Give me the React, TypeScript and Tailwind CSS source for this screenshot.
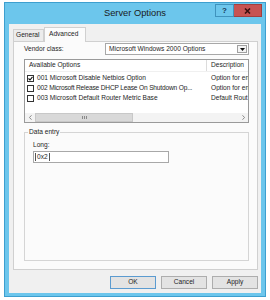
export default function App() {
  const rows = [
    { checked: true, name: "001 Microsoft Disable Netbios Option", desc: "Option for en", tight: false },
    { checked: false, name: "002 Microsoft Release DHCP Lease On Shutdown Op...", desc: "Option for en", tight: true },
    { checked: false, name: "003 Microsoft Default Router Metric Base", desc: "Default Rout", tight: false },
  ];
  return (
    <div className="w-[270px] h-[300px] bg-white pt-[2px] pl-[4px] font-['Liberation_Sans',Arial,sans-serif] text-[#1e1e1e]">
      <div className="relative w-[262px] h-[295px] border border-[#3d9fcf] bg-[#6cc6ec] flex flex-col px-[4px] pb-[3px]">
        {/* title bar */}
        <div className="h-[21px] flex items-center justify-center text-[9.3px] text-[#1b1b1b] leading-none">
          Server Options
        </div>
        {/* caption buttons */}
        <div className="absolute top-[1px] right-[3px] flex">
          <div className="w-[19px] h-[13px] border border-[#3f93bd] bg-[#6cc6ec] flex items-center justify-center text-[8px] font-bold text-[#163a56] leading-none">
            ?
          </div>
          <div className="w-[28px] h-[13px] border border-[#a13f3f] border-l-0 bg-[#c75352] flex items-center justify-center">
            <svg width="7" height="6" viewBox="0 0 7 6">
              <path d="M1 0.5 L6 5.5 M6 0.5 L1 5.5" stroke="#3a1010" strokeWidth="1.6" />
            </svg>
          </div>
        </div>
        {/* client area */}
        <div className="flex-1 bg-[#f0f0f0] flex flex-col pl-[4px] pr-[3px] pt-[3px] pb-[4px] text-[6.6px] leading-none">
          {/* tabs */}
          <div className="h-[14px] flex items-end relative z-10">
            <div className="h-[12px] w-[31px] border border-b-0 border-[#d0d0d0] bg-[#ececec] flex items-center pl-[2px]">
              General
            </div>
            <div className="h-[15px] w-[42px] -mb-[1px] border border-b-0 border-[#d0d0d0] bg-[#fbfbfb] flex items-start pt-[3px] pl-[4px]">
              Advanced
            </div>
          </div>
          {/* panel */}
          <div className="h-[229px] border border-[#d0d0d0] bg-[#fbfbfb] flex flex-col pl-[10px] pr-[8px]">
            {/* vendor class */}
            <div className="mt-[1px] h-[12px] flex items-center">
              <div className="w-[81px]">Vendor class:</div>
              <div className="flex-1 h-[12px] border border-[#a8a8a8] bg-white flex items-center pl-[3px] pr-[1px]">
                <span className="flex-1">Microsoft Windows 2000 Options</span>
                <div className="w-[10px] h-[8px] border border-[#a0a0a0] bg-[#f4f4f4] flex items-center justify-center">
                  <svg width="5" height="3" viewBox="0 0 5 3">
                    <path d="M0 0 H5 L2.5 3 Z" fill="#111" />
                  </svg>
                </div>
              </div>
            </div>
            {/* list */}
            <div className="mt-[4px] h-[64px] border border-[#9a9a9a] bg-white flex flex-col overflow-hidden">
              <div className="h-[12px] flex items-center border-b border-[#f0f0f0] shrink-0">
                <div className="w-[182px] pl-[4px] border-r border-[#dcdcdc] h-full flex items-center">
                  Available Options
                </div>
                <div className="pl-[4px] whitespace-nowrap">Description</div>
              </div>
              <div className="mt-[1px] h-[31px] flex flex-col shrink-0">
                {rows.map((r) => (
                  <div key={r.name} className="h-[10px] flex items-center whitespace-nowrap">
                    <div className="w-[182px] flex items-center pl-[2px] overflow-hidden shrink-0">
                      <div className="w-[7px] h-[7px] border border-[#333] bg-white flex items-center justify-center shrink-0">
                        {r.checked && (
                          <svg width="5" height="5" viewBox="0 0 5 5">
                            <path d="M0.5 2.5 L2 4 L4.5 0.8" stroke="#111" strokeWidth="1.1" fill="none" />
                          </svg>
                        )}
                      </div>
                      <span className={r.tight ? "ml-[3px] tracking-[-0.17px]" : "ml-[3px]"}>{r.name}</span>
                    </div>
                    <div className="pl-[4px] overflow-hidden">{r.desc}</div>
                  </div>
                ))}
              </div>
              <div className="flex-1" />
              {/* scrollbar */}
              <div className="h-[9px] flex items-stretch bg-[#f3f3f3] shrink-0">
                <div className="w-[10px] flex items-center justify-center">
                  <svg width="3" height="5" viewBox="0 0 3 5">
                    <path d="M2.5 0.3 L0.5 2.5 L2.5 4.7" stroke="#707070" fill="none" strokeWidth="0.8" />
                  </svg>
                </div>
                <div className="w-[98px] bg-[#d9d9d9] border border-[#c8c8c8] flex items-center justify-center gap-[1px]">
                  <div className="w-[1px] h-[3px] bg-[#8a8a8a]" />
                  <div className="w-[1px] h-[3px] bg-[#8a8a8a]" />
                  <div className="w-[1px] h-[3px] bg-[#8a8a8a]" />
                </div>
                <div className="flex-1" />
                <div className="w-[10px] flex items-center justify-center">
                  <svg width="3" height="5" viewBox="0 0 3 5">
                    <path d="M0.5 0.3 L2.5 2.5 L0.5 4.7" stroke="#707070" fill="none" strokeWidth="0.8" />
                  </svg>
                </div>
              </div>
            </div>
            {/* group box */}
            <div className="relative mt-[9px] h-[129px] border border-[#d5d5d5] flex flex-col pl-[8px]">
              <span className="absolute -top-[4px] left-[3px] bg-[#fbfbfb] px-[1px]">Data entry</span>
              <div className="mt-[8px] h-[8px] flex items-center">Long:</div>
              <div className="mt-[2px] w-[136px] h-[12px] border border-[#a8a8a8] bg-white flex items-center pl-[1px]">
                <span className="border-l border-r border-[#555] px-[1px] h-[8px] flex items-center">0x2</span>
              </div>
            </div>
          </div>
          {/* buttons */}
          <div className="mt-[6px] h-[13px] flex justify-end gap-[5px]">
            <div className="w-[46px] h-[13px] border border-[#5b9bd0] bg-[#e3e3e3] flex items-center justify-center">
              OK
            </div>
            <div className="w-[46px] h-[13px] border border-[#adadad] bg-[#e3e3e3] flex items-center justify-center">
              Cancel
            </div>
            <div className="w-[46px] h-[13px] border border-[#adadad] bg-[#e3e3e3] flex items-center justify-center">
              Apply
            </div>
          </div>
        </div>
      </div>
    </div>
  );
}
